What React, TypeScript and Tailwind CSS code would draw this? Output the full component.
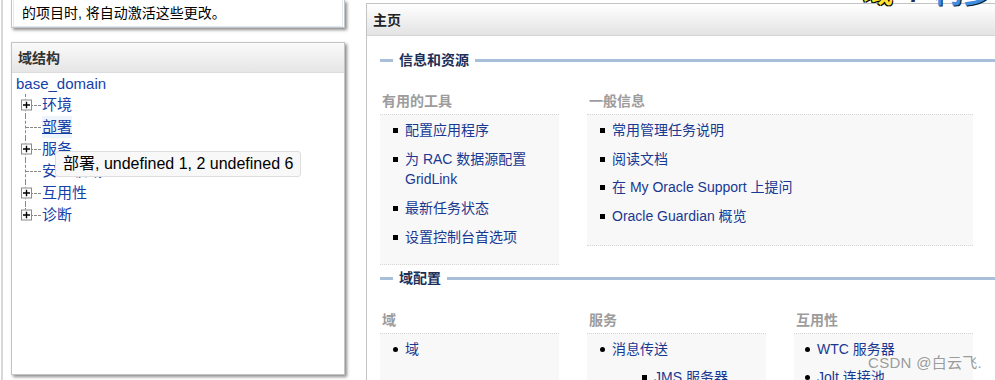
import React from 'react'

const font = { fontFamily: '"Liberation Sans", "Noto Sans CJK SC", sans-serif' }

function Plus() {
  return (
    <span className="absolute left-[-4px] top-1/2 -translate-y-1/2 w-[11px] h-[11px] border border-[#8a8a8a] bg-white flex items-center justify-center">
      <svg width="7" height="7" viewBox="0 0 7 7">
        <path d="M0 3.5H7M3.5 0V7" stroke="#000" strokeWidth="1.4" />
      </svg>
    </span>
  )
}

function TreeRow({ label, plus, last, hover }: { label: string; plus?: boolean; last?: boolean; hover?: boolean }) {
  return (
    <div className="flex items-center h-[22px]">
      <div className="relative w-[16px] h-full ml-[9px]">
        <span
          className={`absolute left-0 top-0 border-l border-dashed border-[#888] ${last ? 'h-1/2' : 'h-full'}`}
        />
        <span className="absolute left-[1px] right-0 top-1/2 border-t border-dashed border-[#888]" />
        {plus && <Plus />}
      </div>
      <span className={`ml-[1px] text-[15px] text-[#1440a8] ${hover ? 'underline bg-[#eef4fb]' : ''}`}>{label}</span>
    </div>
  )
}

function Section({ title }: { title: string }) {
  return (
    <div className="flex items-center h-[20px]">
      <span className="w-[13px] h-[3px] bg-[#a9bed9]" />
      <span className="mx-[6px] text-[14px] font-bold text-[#1b2f57]">{title}</span>
      <span className="flex-1 h-[3px] bg-[#a9bed9]" />
    </div>
  )
}

function Square() {
  return <span className="w-[5px] h-[5px] bg-black mt-[8px] shrink-0" />
}

function Dot() {
  return <span className="w-[5px] h-[5px] rounded-full bg-black mt-[8px] shrink-0" />
}

function Item({ children, round }: { children: React.ReactNode; round?: boolean }) {
  return (
    <li className="flex gap-[7px] items-start text-[14px] leading-[20px] text-[#193891]">
      {round ? <Dot /> : <Square />}
      <span>{children}</span>
    </li>
  )
}

export default function App() {
  return (
    <div className="relative flex w-[995px] h-[380px] overflow-hidden bg-white" style={font}>
      <div className="absolute left-[1px] top-0 h-full w-[2px] bg-[#d8d8d8]" />

      {/* left column */}
      <div className="w-[366px] shrink-0 pl-[11px]">
        <div className="w-[334px] h-[28px] border border-t-0 border-[#c4c4c4] bg-white shadow-[2px_2px_3px_rgba(0,0,0,0.45)]">
          <div className="h-full mx-[1px] border-x border-b border-[#dfe8f5] pl-[8px] text-[14px] leading-[26px] text-black">
            的项目时, 将自动激活这些更改。
          </div>
        </div>

        <div className="mt-[14px] w-[334px] h-[333px] border border-[#c4c4c4] bg-white shadow-[2px_2px_3px_rgba(0,0,0,0.45)] relative">
          <div className="h-[30px] bg-gradient-to-b from-[#fafafa] to-[#e6e6e6] border-b border-[#dcdcdc] pl-[6px] text-[14px] font-bold leading-[30px] text-[#333]">
            域结构
          </div>
          <div className="pl-[4px]">
            <div className="h-[21px] leading-[22px] text-[15px] text-[#1440a8]">base_domain</div>
            <TreeRow label="环境" plus />
            <TreeRow label="部署" hover />
            <TreeRow label="服务" plus />
            <TreeRow label="安全领域" />
            <TreeRow label="互用性" plus />
            <TreeRow label="诊断" plus last />
          </div>

          <div className="absolute left-[43px] top-[108px] h-[26px] px-[7px] rounded-[3px] border border-[#dedede] bg-[#f8f8f8] text-[16px] leading-[24px] text-black whitespace-nowrap">
            部署, undefined 1, 2 undefined 6
          </div>
        </div>
      </div>

      {/* right column */}
      <div className="flex-1 mt-[3px] border-l border-t border-[#c4c4c4] relative">
        <div className="h-[32px] bg-gradient-to-b from-[#ffffff] to-[#e3e3e3] border-b border-[#d4d4d4] pl-[6px] text-[14px] font-bold leading-[32px] text-[#222]">
          主页
        </div>
        <div className="absolute right-[2px] top-[-27px] flex text-[30px] font-bold leading-none">
          <span className="text-[#ffe533] [text-shadow:1px_1px_0_#000,-1px_-1px_0_#000,1px_-1px_0_#000,-1px_1px_0_#000]">域</span>
          <span className="ml-[18px] text-[#1e2f5a]">/</span>
          <span className="ml-[14px] text-[#3d8ee0] [text-shadow:1px_1px_0_#123]">构多</span>
        </div>

        <div className="pl-[13px]">
          <div className="mt-[14px]">
            <Section title="信息和资源" />
          </div>

          <div className="flex gap-[28px] mt-[22px]">
            <div className="w-[179px]">
              <div className="pl-[2px] text-[14px] font-bold leading-[18px] text-[#9c9c9c]">有用的工具</div>
              <div className="mt-[4px] h-[151px] bg-[#f8f8f8] border-t border-b border-dotted border-[#d6d6d6]">
                <ul className="pl-[13px] pt-[5px] flex flex-col gap-[9px]">
                  <Item>配置应用程序</Item>
                  <Item>
                    为 RAC 数据源配置
                    <br />
                    GridLink
                  </Item>
                  <Item>最新任务状态</Item>
                  <Item>设置控制台首选项</Item>
                </ul>
              </div>
            </div>
            <div className="w-[386px]">
              <div className="pl-[2px] text-[14px] font-bold leading-[18px] text-[#9c9c9c]">一般信息</div>
              <div className="mt-[4px] h-[132px] bg-[#f8f8f8] border-t border-b border-dotted border-[#d6d6d6]">
                <ul className="pl-[13px] pt-[5px] flex flex-col gap-[8.5px]">
                  <Item>常用管理任务说明</Item>
                  <Item>阅读文档</Item>
                  <Item>在 My Oracle Support 上提问</Item>
                  <Item>Oracle Guardian 概览</Item>
                </ul>
              </div>
            </div>
          </div>

          <div className="mt-[3px]">
            <Section title="域配置" />
          </div>

          <div className="flex gap-[28px] mt-[23px]">
            <div className="w-[179px]">
              <div className="pl-[2px] text-[14px] font-bold leading-[18px] text-[#9c9c9c]">域</div>
              <div className="mt-[4px] h-[60px] bg-[#f8f8f8] border-t border-dotted border-[#d6d6d6]">
                <ul className="pl-[13px] pt-[5px]">
                  <Item round>域</Item>
                </ul>
              </div>
            </div>
            <div className="w-[179px]">
              <div className="pl-[2px] text-[14px] font-bold leading-[18px] text-[#9c9c9c]">服务</div>
              <div className="mt-[4px] h-[60px] bg-[#f8f8f8] border-t border-dotted border-[#d6d6d6]">
                <ul className="pl-[13px] pt-[5px] flex flex-col gap-[8px]">
                  <Item round>消息传送</Item>
                  <li className="pl-[42px]">
                    <ul>
                      <Item>JMS 服务器</Item>
                    </ul>
                  </li>
                </ul>
              </div>
            </div>
            <div className="w-[179px]">
              <div className="pl-[2px] text-[14px] font-bold leading-[18px] text-[#9c9c9c]">互用性</div>
              <div className="mt-[4px] h-[60px] bg-[#f8f8f8] border-t border-dotted border-[#d6d6d6]">
                <ul className="pl-[11px] pt-[5px] flex flex-col gap-[8px]">
                  <Item round>WTC 服务器</Item>
                  <Item round>Jolt 连接池</Item>
                </ul>
              </div>
            </div>
          </div>
        </div>

        <div className="absolute left-[501px] top-[348px] text-[15px] text-[#8f8f8f]/90 tracking-[0.3px]">
          CSDN @白云飞.
        </div>
      </div>
    </div>
  )
}
